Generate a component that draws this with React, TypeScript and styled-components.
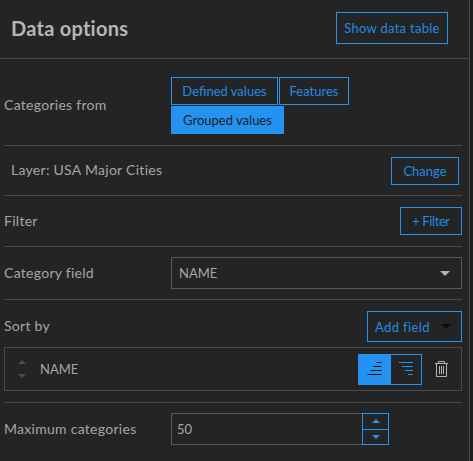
import { createGlobalStyle } from 'styled-components';
import styled from 'styled-components';

const GlobalStyle = createGlobalStyle`
  html, body {
    margin: 0;
    padding: 0;
    background: #1e1e1e;
  }
  * {
    box-sizing: border-box;
  }
`;

const Panel = styled.div`
  width: 470px;
  height: 461px;
  overflow: hidden;
  background: #242424;
  border-right: 1px solid #4a4a4a;
  color: #a6a6a6;
  font-family: Lato, "Open Sans", sans-serif;
  font-size: 14px;
  letter-spacing: 0.28px;
`;

const Header = styled.header`
  display: flex;
  align-items: center;
  justify-content: space-between;
  height: 59px;
  padding: 0 21px 3px 11px;
  border-bottom: 1px solid #484848;
`;

const Title = styled.h2`
  margin: 0;
  font-size: 20px;
  font-weight: 700;
  letter-spacing: 0.25px;
  color: #b6b6b6;
`;

const Body = styled.div`
  width: 458px;
  margin-left: 4px;
`;

const Row = styled.div<{ $height: number }>`
  display: flex;
  align-items: center;
  justify-content: space-between;
  height: ${(p) => p.$height}px;
  border-bottom: 1px solid #484848;
`;

const CategoriesRow = styled(Row)`
  justify-content: flex-start;
  padding-top: 6px;
`;

const FormRow = styled(Row)`
  justify-content: flex-start;
`;

const LastRow = styled(Row)`
  justify-content: flex-start;
  padding-bottom: 6px;
  border-bottom: 0;
`;

const Label = styled.span`
  flex: 0 0 167px;
  padding-bottom: 2px;
`;

const LayerName = styled.span`
  padding: 0 0 2px 7px;
`;

const Segments = styled.div`
  display: flex;
  flex-wrap: wrap;
  gap: 1px;
  width: 200px;
`;

const Button = styled.button<{ $active?: boolean; $w: number; $h: number; $spacing?: number }>`
  display: inline-flex;
  align-items: center;
  justify-content: center;
  width: ${(p) => p.$w}px;
  height: ${(p) => p.$h}px;
  padding: 0;
  border: 1px solid #2492f0;
  background: ${(p) => (p.$active ? '#2492f0' : 'transparent')};
  color: ${(p) => (p.$active ? '#1d1d1d' : '#2289e4')};
  font-family: inherit;
  font-size: 13px;
  letter-spacing: ${(p) => p.$spacing ?? 0}px;
`;

const ChangeButton = styled(Button)`
  margin-right: 3px;
`;

const AddFieldButton = styled(Button)`
  gap: 11px;
  justify-content: flex-end;
  padding-right: 10px;
`;

const Select = styled.div`
  flex: 1;
  display: flex;
  align-items: center;
  justify-content: space-between;
  height: 32px;
  padding: 0 11px 0 7px;
  border: 1px solid #585858;
  font-size: 13px;
  letter-spacing: 0;
`;

const Caret = styled.span<{ $color: string }>`
  width: 0;
  height: 0;
  border-left: 5px solid transparent;
  border-right: 5px solid transparent;
  border-top: 5px solid ${(p) => p.$color};
`;

const SortSection = styled.div`
  height: 103px;
  padding-top: 11px;
  border-bottom: 1px solid #484848;
`;

const SortHead = styled.div`
  display: flex;
  align-items: center;
  justify-content: space-between;
`;

const SortItem = styled.div`
  display: flex;
  align-items: center;
  height: 44px;
  margin-top: 5px;
  padding: 0 13px 0 13px;
  border: 1px solid #484848;
`;

const Grip = styled.div`
  display: flex;
  flex-direction: column;
  gap: 10px;
  margin-right: 14px;
`;

const GripArrow = styled.span<{ $up?: boolean }>`
  width: 0;
  height: 0;
  border-left: 4px solid transparent;
  border-right: 4px solid transparent;
  ${(p) => (p.$up ? 'border-bottom' : 'border-top')}: 4px solid #4c4c4c;
`;

const SortName = styled.span`
  flex: 1;
  font-size: 13px;
  letter-spacing: 0;
`;

const SortToggle = styled.div`
  display: flex;
  height: 31px;
  margin-right: 13px;
`;

const SortButton = styled.button<{ $active?: boolean }>`
  display: flex;
  align-items: center;
  justify-content: center;
  width: ${(p) => (p.$active ? 33 : 31)}px;
  height: 31px;
  padding: 0;
  border: 1px solid #2492f0;
  border-left-width: ${(p) => (p.$active ? 1 : 0)}px;
  background: ${(p) => (p.$active ? '#2492f0' : 'transparent')};
`;

const NumberField = styled.div`
  display: flex;
  width: 218px;
  height: 32px;
`;

const NumberValue = styled.div`
  flex: 1;
  display: flex;
  align-items: center;
  padding-left: 5px;
  border: 1px solid #585858;
  border-right: 0;
  font-size: 13px;
  letter-spacing: 0;
`;

const Spinner = styled.div`
  display: flex;
  flex-direction: column;
  width: 27px;
  border: 1px solid #2492f0;
`;

const SpinButton = styled.span`
  flex: 1;
  display: flex;
  align-items: center;
  justify-content: center;
  & + & {
    border-top: 1px solid #2492f0;
  }
`;

const SpinArrow = styled.span<{ $up?: boolean }>`
  width: 0;
  height: 0;
  border-left: 4px solid transparent;
  border-right: 4px solid transparent;
  ${(p) => (p.$up ? 'border-bottom' : 'border-top')}: 4px solid #2492f0;
`;

const SortAscIcon = () => (
  <svg width="16" height="14" viewBox="0 0 16 14" stroke="#111" strokeWidth="1">
    <path d="M9.5 .5h5M6.5 4.5h8M3.5 8.5h11M.5 12.5h14" />
  </svg>
);

const SortDescIcon = () => (
  <svg width="16" height="14" viewBox="0 0 16 14" stroke="#2492f0" strokeWidth="1">
    <path d="M1 .5h14M4 4.5h11M7 8.5h8M10 12.5h5" />
  </svg>
);

const TrashIcon = () => (
  <svg width="13" height="16" viewBox="0 0 13 16" fill="none" stroke="#b4b4b4" strokeWidth="1">
    <path d="M0 2.5h13M3.5 2.5V.5h6v2M1.5 3v12.5h10V3M4.5 5v8M6.5 5v8M8.5 5v8" />
  </svg>
);

export default function App() {
  return (
    <Panel>
      <GlobalStyle />
      <Header>
        <Title>Data options</Title>
        <Button $w={112} $h={32} $spacing={0.28}>Show data table</Button>
      </Header>
      <Body>
        <CategoriesRow $height={87}>
          <Label>Categories from</Label>
          <Segments>
            <Button $w={107} $h={28}>Defined values</Button>
            <Button $w={70} $h={28}>Features</Button>
            <Button $active $w={113} $h={28}>Grouped values</Button>
          </Segments>
        </CategoriesRow>
        <Row $height={50}>
          <LayerName>Layer: USA Major Cities</LayerName>
          <ChangeButton $w={68} $h={28}>Change</ChangeButton>
        </Row>
        <Row $height={51}>
          <Label>Filter</Label>
          <Button $w={62} $h={28} $spacing={-0.4}>+ Filter</Button>
        </Row>
        <FormRow $height={53}>
          <Label>Category field</Label>
          <Select>
            NAME
            <Caret $color="#b4b4b4" />
          </Select>
        </FormRow>
        <SortSection>
          <SortHead>
            <Label>Sort by</Label>
            <AddFieldButton $w={95} $h={31} $spacing={0.4}>
              Add field
              <Caret $color="#0c0c0c" />
            </AddFieldButton>
          </SortHead>
          <SortItem>
            <Grip>
              <GripArrow $up />
              <GripArrow />
            </Grip>
            <SortName>NAME</SortName>
            <SortToggle>
              <SortButton $active><SortAscIcon /></SortButton>
              <SortButton><SortDescIcon /></SortButton>
            </SortToggle>
            <TrashIcon />
          </SortItem>
        </SortSection>
        <LastRow $height={58}>
          <Label>Maximum categories</Label>
          <NumberField>
            <NumberValue>50</NumberValue>
            <Spinner>
              <SpinButton><SpinArrow $up /></SpinButton>
              <SpinButton><SpinArrow /></SpinButton>
            </Spinner>
          </NumberField>
        </LastRow>
      </Body>
    </Panel>
  );
}
